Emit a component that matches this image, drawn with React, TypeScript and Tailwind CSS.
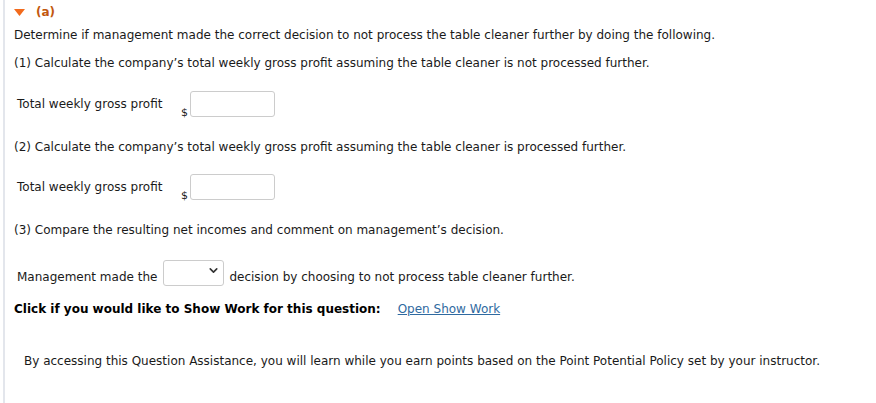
import { ChevronDown } from 'lucide-react';

const font = { fontFamily: '"DejaVu Sans", Verdana, sans-serif' };

function MoneyRow() {
  return (
    <div className="flex items-start pl-[3px]">
      <span className="w-[164px] pt-[5px] leading-[16px]">Total weekly gross profit</span>
      <span className="pt-[16px] text-[11px] leading-[12px]">$</span>
      <input
        type="text"
        className="ml-[2px] w-[85px] h-[26px] rounded-[3px] border border-[#cccccc] bg-white outline-none"
      />
    </div>
  );
}

export default function App() {
  return (
    <div className="min-h-[403px] bg-white text-[12px] text-[#1a1a1a]" style={font}>
      <div className="ml-[3px] min-h-[403px] border-l-2 border-[#e3e6ec] pl-[9px] pt-[5px]">
        {/* header */}
        <div className="flex items-center gap-[11px] h-[14px]">
          <svg width="11" height="7" viewBox="0 0 11 7">
            <polygon points="0,0 11,0 5.5,7" fill="#f26b1d" />
          </svg>
          <span className="font-bold text-[#c2570f] leading-[14px]">(a)</span>
        </div>

        <p className="mt-[9px] leading-[15px]">
          Determine if management made the correct decision to not process the table cleaner further by doing the following.
        </p>
        <p className="mt-[13px] leading-[15px]">
          (1) Calculate the company’s total weekly gross profit assuming the table cleaner is not processed further.
        </p>

        <div className="mt-[20px]">
          <MoneyRow />
        </div>

        <p className="mt-[21px] leading-[15px]">
          (2) Calculate the company’s total weekly gross profit assuming the table cleaner is processed further.
        </p>

        <div className="mt-[19px]">
          <MoneyRow />
        </div>

        <p className="mt-[21px] leading-[15px]">
          (3) Compare the resulting net incomes and comment on management’s decision.
        </p>

        <div className="mt-[22px] flex items-end pl-[3px]">
          <span className="leading-[15px] pb-[1px]">Management made the</span>
          <div className="ml-[6px] relative w-[61px] h-[26px] rounded-[3px] border border-[#cccccc] bg-white">
            <ChevronDown className="absolute right-[3px] top-[3px] w-[13px] h-[13px] text-[#333]" strokeWidth={3} />
          </div>
          <span className="ml-[5px] leading-[15px] pb-[1px]">decision by choosing to not process table cleaner further.</span>
        </div>

        <div className="mt-[16px] flex items-center leading-[15px]">
          <span className="font-bold text-black">Click if you would like to Show Work for this question:</span>
          <a className="ml-[17px] text-[#2f6aa0] underline cursor-pointer">Open Show Work</a>
        </div>

        <p className="mt-[37px] pl-[10px] leading-[15px]">
          By accessing this Question Assistance, you will learn while you earn points based on the Point Potential Policy set by your instructor.
        </p>
      </div>
    </div>
  );
}
